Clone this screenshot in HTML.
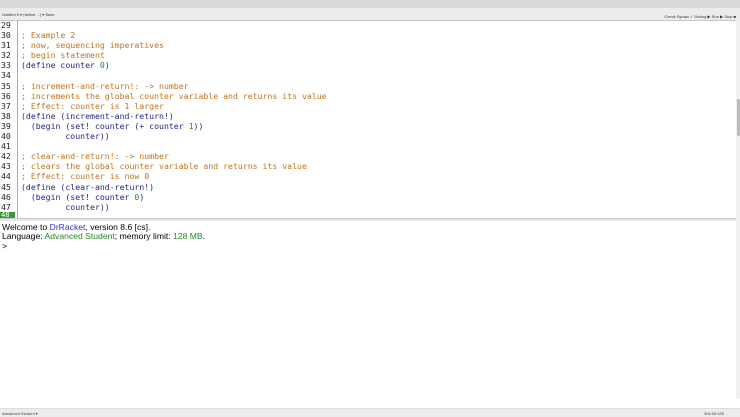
<!DOCTYPE html>
<html><head><style>
body{margin:0;width:740px;height:416px;overflow:hidden;background:#fff;position:relative;font-family:"Liberation Sans",sans-serif}
.title{position:absolute;top:0;left:0;width:740px;height:8px;background:#d8dade}
.tb{position:absolute;top:8px;left:0;width:740px;height:12px;background:#ececec;border-bottom:1px solid #c8c8c8}
.code{position:absolute;top:20px;left:0;width:736px;height:198px;font-family:"DejaVu Sans Mono",monospace;font-size:8.2px;line-height:10.1px;}
.gut{position:absolute;left:0;top:0;width:17px;border-right:1px solid #aaa;height:198px;color:#222}
.gut div{padding-left:1px}
.lines{position:absolute;left:21px;top:0;white-space:pre}
.c{color:#c2741f}.k{color:#262680}.n{color:#228b22}
.sep{position:absolute;top:218px;left:0;width:736px;height:2px;background:#e6e6e6;border-top:1px solid #ccc}
.rep{position:absolute;top:223px;left:2px;font-size:8.6px;line-height:9.3px;color:#000}
.sb{position:absolute;top:19px;right:0;width:4px;height:380px;background:#f0f0f0}
.thumb{position:absolute;top:80px;right:0;width:3px;height:37px;background:#bbb;border-radius:2px}
.foot{position:absolute;top:408px;left:0;width:740px;height:8px;background:#ececec;border-top:1px solid #ddd;font-size:4px;color:#444}
</style></head><body>
<div class="title"></div>
<div class="tb"><span style="position:absolute;left:2px;top:4px;font-size:4px;color:#333">Untitled 5 ▾ (define ...) ▾ Save</span><span style="position:absolute;right:4px;top:6px;font-size:4px;color:#333">Check Syntax ✓ Debug ▶ Run ▶ Stop ■</span></div>
<div class="code">
<div class="gut"><div>29</div><div>30</div><div>31</div><div>32</div><div>33</div><div>34</div><div>35</div><div>36</div><div>37</div><div>38</div><div>39</div><div>40</div><div>41</div><div>42</div><div>43</div><div>44</div><div>45</div><div>46</div><div>47</div><div style="background:#3a9a3a;color:#fff;width:14px;height:6px;line-height:6px;font-size:7px">48</div></div>
<div class="lines">
<span class="c">; Example 2</span>
<span class="c">; now, sequencing imperatives</span>
<span class="c">; begin statement</span>
<span class="k">(define counter <span class="n">0</span>)</span>

<span class="c">; increment-and-return!: -&gt; number</span>
<span class="c">; increments the global counter variable and returns its value</span>
<span class="c">; Effect: counter is 1 larger</span>
<span class="k">(define (increment-and-return!)</span>
<span class="k">  (begin (set! counter (+ counter <span class="n">1</span>))</span>
<span class="k">         counter))</span>

<span class="c">; clear-and-return!: -&gt; number</span>
<span class="c">; clears the global counter variable and returns its value</span>
<span class="c">; Effect: counter is now 0</span>
<span class="k">(define (clear-and-return!)</span>
<span class="k">  (begin (set! counter <span class="n">0</span>)</span>
<span class="k">         counter))</span></div>
</div>
<div class="sep"></div>
<div class="rep">Welcome to <span style="color:#3333cc">DrRacket</span>, version 8.6 [cs].<br>Language: <span style="color:#228b22">Advanced Student</span>; memory limit: <span style="color:#228b22">128 MB</span>.<br>&gt;</div>
<div class="sb"><div class="thumb"></div></div>
<div class="foot"><span style="position:absolute;left:2px;top:2px">Advanced Student ▾</span><span style="position:absolute;right:16px;top:2px">304:00:435</span></div>
</body></html>
